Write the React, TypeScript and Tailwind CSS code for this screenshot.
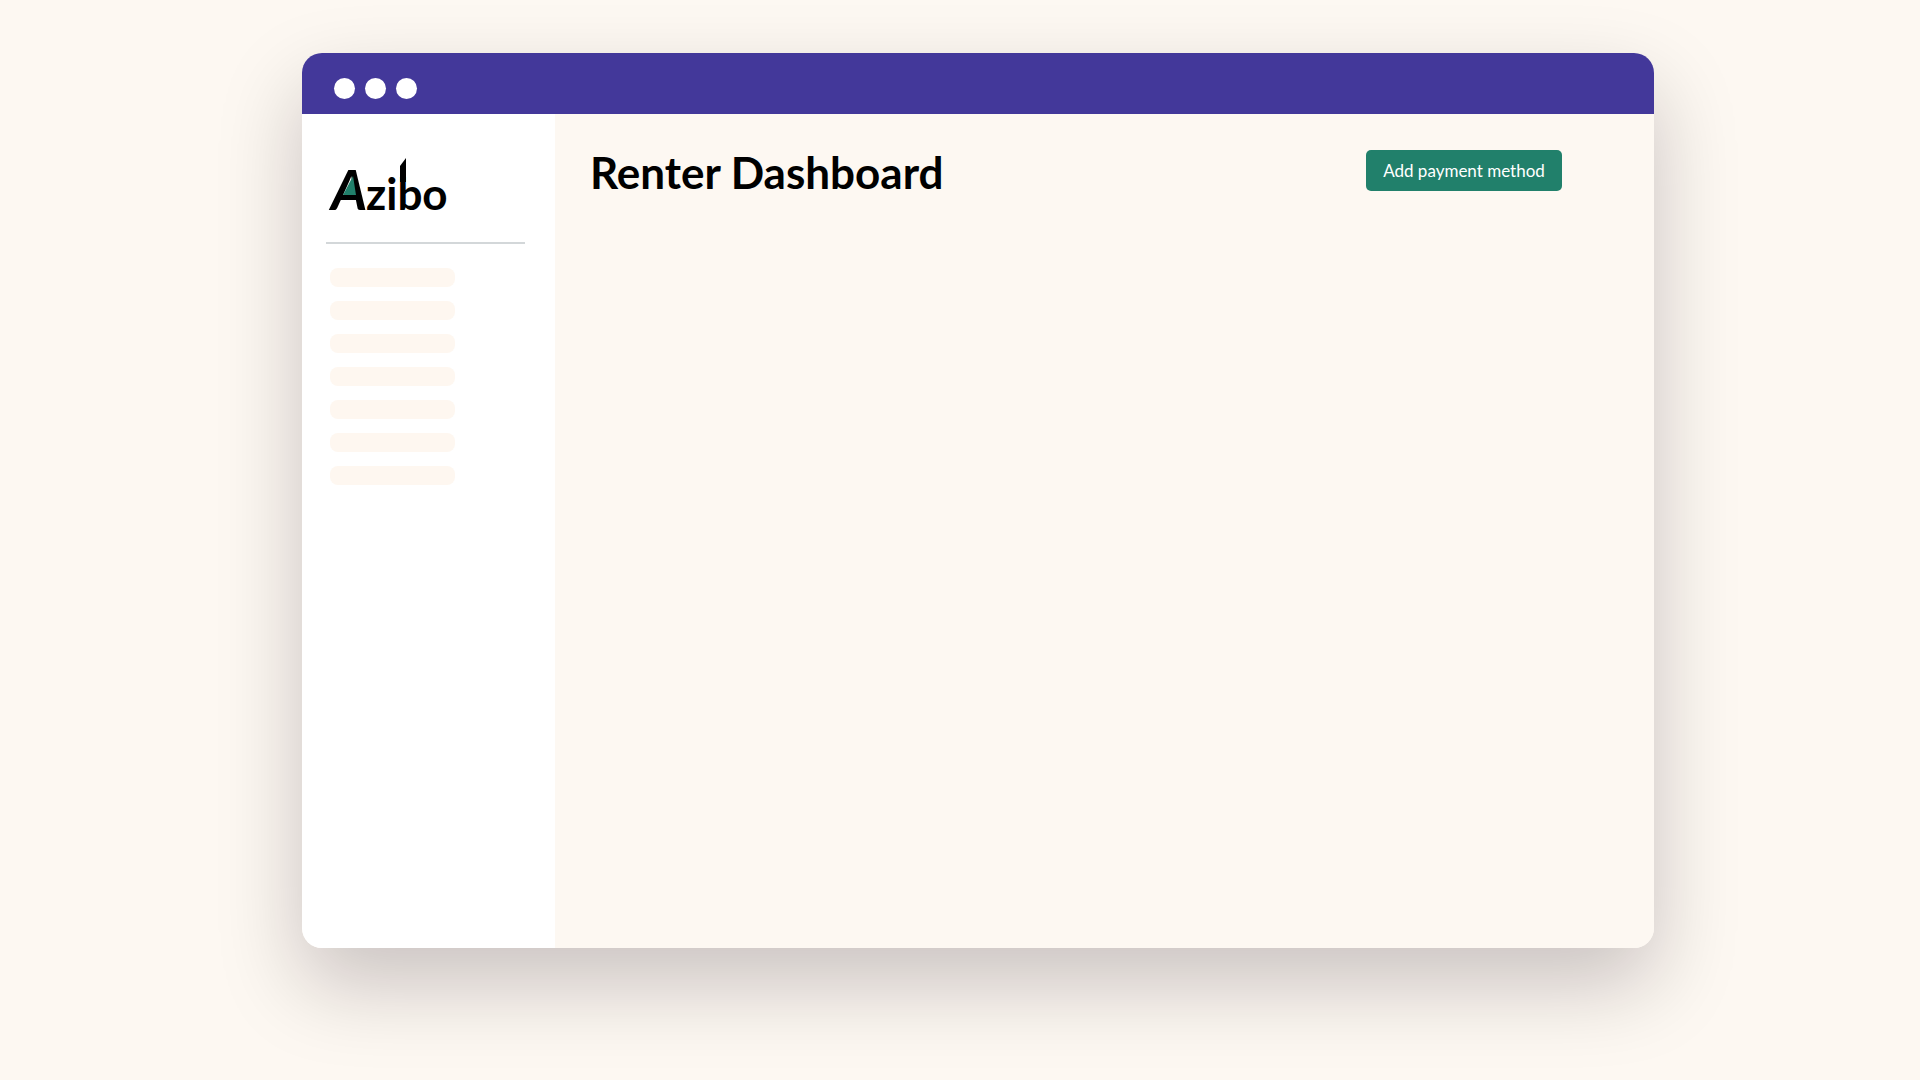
const MENU_ITEMS = ["one", "two", "three", "four", "five", "six", "seven"];

function Logo() {
  return (
    <svg
      width="130"
      height="60"
      viewBox="0 0 130 60"
      role="img"
      aria-label="Azibo"
      className="overflow-visible"
    >
      <text y="52" fill="#000" className="font-['Lato',sans-serif] font-bold">
        <tspan x="1" fontSize="56" fontStyle="italic">
          A
        </tspan>
        <tspan x="36" fontSize="44">
          zibo
        </tspan>
      </text>
      {/* green counter of the A */}
      <polygon points="13,37 23,18 26,37" fill="#21806b" />
      {/* pointed stem of the b */}
      <polygon points="70,24 70,8 76,0 76,24" fill="#000" />
    </svg>
  );
}

function TitleBar() {
  return (
    <div className="flex h-[61px] items-center gap-[10px] bg-[#43389a] pl-8 pt-[9px]">
      <span className="size-[21px] rounded-full bg-white" />
      <span className="size-[21px] rounded-full bg-white" />
      <span className="size-[21px] rounded-full bg-white" />
    </div>
  );
}

function Sidebar() {
  return (
    <aside className="w-[253px] shrink-0 bg-white pl-6 pr-[30px] pt-11">
      <div className="pl-1">
        <Logo />
      </div>
      <hr className="mt-6 border-t-2 border-[#d3d7d9]" />
      {/* menu placeholders */}
      <ul className="mt-6 flex flex-col gap-[14px] pl-1">
        {MENU_ITEMS.map((item) => (
          <li key={item} className="h-[19px] w-[125px] rounded-[8px] bg-[#fef7f0]" />
        ))}
      </ul>
    </aside>
  );
}

export default function App() {
  return (
    <div className="flex min-h-screen bg-[#fdf8f2] pb-[132px] pl-[302px] pr-[266px] pt-[53px] font-['Lato',sans-serif]">
      <div className="flex flex-1 flex-col overflow-hidden rounded-[20px] shadow-[0_36px_84px_rgba(16,6,20,0.22)]">
        <TitleBar />
        <div className="flex flex-1">
          <Sidebar />
          <main className="flex-1 bg-[#fdf8f2] pl-[35px] pr-[92px] pt-9">
            <header className="flex items-start justify-between">
              <h1 className="text-[44px] font-bold leading-[44px] text-black">Renter Dashboard</h1>
              <button
                type="button"
                className="h-[41px] w-[196px] rounded-[5px] bg-[#21806b] text-[17px] text-white"
              >
                Add payment method
              </button>
            </header>
          </main>
        </div>
      </div>
    </div>
  );
}
